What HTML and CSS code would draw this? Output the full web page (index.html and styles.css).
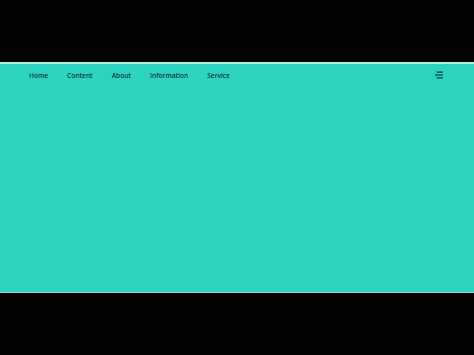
FILE: index.html
```html
<!DOCTYPE html>
<html>
<head>
<meta charset="utf-8">
<link rel="stylesheet" href="styles.css">
</head>
<body>
<div class="screen">
  <section class="hero">
    <nav class="nav">
      <ul class="links">
        <li>Home</li>
        <li>Content</li>
        <li>About</li>
        <li>Information</li>
        <li>Service</li>
      </ul>
      <svg class="menu" width="9" height="8" viewBox="0 0 9 8">
        <rect x="1.5" y="0.5" width="6.5" height="1.2" fill="#0f3f3c"/>
        <rect x="0" y="3.4" width="8" height="1.2" fill="#0f3f3c"/>
        <rect x="1.5" y="6.3" width="6.5" height="1.2" fill="#0f3f3c"/>
      </svg>
    </nav>
  </section>
</div>
</body>
</html>
```
FILE: styles.css
```css
html, body {
  margin: 0;
  padding: 0;
  background: #000;
}
.screen {
  width: 474px;
  height: 355px;
  padding-top: 62px;
  box-sizing: border-box;
  background: #020202;
}
.hero {
  height: 231px;
  box-sizing: border-box;
  background: #2dd3c0;
  border-top: 2px solid #b4ede6;
  border-bottom: 1px solid #8fe0d6;
}
.nav {
  display: flex;
  align-items: center;
  justify-content: space-between;
  padding: 3px 30px 0 29px;
  height: 16px;
}
.links {
  display: flex;
  gap: 19px;
  margin: 0;
  padding: 0;
  list-style: none;
  font-family: "Open Sans", "Noto Sans", sans-serif;
  font-size: 6.6px;
  font-weight: 600;
  color: #0d3f3c;
}
.menu {
  display: block;
}
```
